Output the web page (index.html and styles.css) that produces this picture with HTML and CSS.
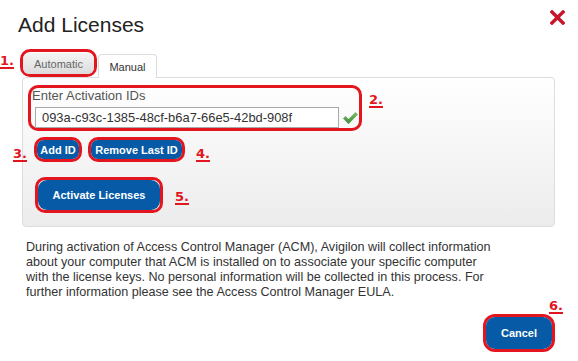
FILE: index.html
```html
<!DOCTYPE html>
<html>
<head>
<meta charset="utf-8">
<link rel="stylesheet" href="styles.css">
</head>
<body>
<div class="dialog">
  <div class="header">
    <h1 class="title">Add Licenses</h1>
    <svg class="close" width="15" height="15" viewBox="0 0 15 15"><path d="M2 2 L13 13 M13 2 L2 13" stroke="#c8152c" stroke-width="3.4" stroke-linecap="square"/></svg>
  </div>

  <div class="tabs">
    <span class="num num-1">1.</span>
    <div class="mark mark-tab"><div class="tab tab-active">Automatic</div></div>
    <div class="tab tab-plain">Manual</div>
  </div>

  <div class="panel">
    <div class="row row-input">
      <div class="mark mark-group">
        <div class="label">Enter Activation IDs</div>
        <div class="input-line">
          <div class="input">093a-c93c-1385-48cf-b6a7-66e5-42bd-908f</div>
          <svg class="check" width="17" height="14" viewBox="0 0 17 14">
            <defs><linearGradient id="g" x1="0" y1="0" x2="0" y2="1"><stop offset="0" stop-color="#7bbf6a"/><stop offset="1" stop-color="#3f8a3a"/></linearGradient></defs>
            <path d="M1 7.5 L3.5 5 L6.5 8 L13.5 1 L16 3.5 L6.5 13 Z" fill="url(#g)"/>
          </svg>
        </div>
      </div>
      <span class="num num-2">2.</span>
    </div>

    <div class="row row-buttons">
      <div class="mark mark-btn mark-add"><span class="num num-3">3.</span><button class="btn btn-small">Add ID</button></div>
      <div class="mark mark-btn"><button class="btn btn-small btn-remove">Remove Last ID</button></div>
      <span class="num num-4">4.</span>
    </div>

    <div class="row row-activate">
      <div class="mark mark-btn"><button class="btn btn-activate">Activate Licenses</button></div>
      <span class="num num-5">5.</span>
    </div>
  </div>

  <p class="info">During activation of Access Control Manager (ACM), Avigilon will collect information about your computer that ACM is installed on to associate your specific computer with the license keys. No personal information will be collected in this process. For further information please see the Access Control Manager EULA.</p>

  <div class="footer">
    <div class="mark mark-btn mark-cancel"><span class="num num-6">6.</span><button class="btn btn-cancel">Cancel</button></div>
  </div>
</div>
</body>
</html>
```
FILE: styles.css
```css
* { box-sizing: border-box; }
html, body { margin: 0; padding: 0; background: #fff; }
body {
  width: 578px;
  height: 361px;
  overflow: hidden;
  font-family: "Liberation Sans", Arial, sans-serif;
  color: #333;
}
.dialog { position: relative; }

.header {
  display: flex;
  justify-content: space-between;
  align-items: flex-start;
  padding: 10px 13px 0 18px;
  height: 39px;
}
.title {
  margin: 0;
  font-weight: normal;
  font-size: 21px;
  line-height: 29px;
  color: #222;
}
.close { margin-top: 0; }

.num {
  font-family: "DejaVu Sans", Verdana, sans-serif;
  font-weight: bold;
  font-size: 13px;
  line-height: 15px;
  color: #e3161f;
  text-decoration: underline;
  text-decoration-thickness: 1.5px;
  text-underline-offset: 2px;
}

.tabs {
  position: relative;
  display: flex;
  align-items: flex-end;
  margin-top: 10px;
  padding-left: 20px;
  height: 28px;
}
.num-1 { position: absolute; left: 0; top: 4px; }

.mark {
  border: 3px solid #e3161f;
  border-radius: 10px;
}
.mark-tab {
  width: 77px;
  height: 28px;
  padding: 1px 0 0 0;
}
.tab {
  font-size: 11px;
  display: flex;
  align-items: center;
  justify-content: center;
}
.tab-active {
  height: 21px;
  border-radius: 6px;
  background: linear-gradient(#f4f4f4, #dcdcdc);
  color: #666;
}
.tab-plain {
  width: 59px;
  height: 24px;
  margin-left: 1px;
  margin-bottom: -1px;
  border: 1px solid #ddd;
  border-bottom: none;
  border-radius: 4px 4px 0 0;
  background: #fff;
  color: #333;
  padding-top: 1px;
}

.panel {
  margin-left: 22px;
  width: 533px;
  height: 150px;
  border: 1px solid #ddd;
  border-radius: 4px;
  background: linear-gradient(#ffffff, #ececec);
  padding: 7px 0 0 5px;
}
.row { display: flex; }
.row-input { align-items: flex-start; }
.mark-group {
  width: 334px;
  padding: 0 0 0 1px;
}
.label {
  font-size: 13px;
  line-height: 16px;
  color: #555;
}
.input-line {
  display: flex;
  align-items: center;
  margin-top: 3px;
  padding-left: 3px;
}
.input {
  width: 304px;
  height: 21px;
  border: 1px solid #a9a9a9;
  background: #fff;
  font-size: 12.9px;
  line-height: 19px;
  padding-left: 6px;
  color: #333;
}
.check { margin-left: 3px; }
.num-2 { margin: 7px 0 0 7px; }

.row-buttons {
  margin-top: 6px;
  margin-left: 6px;
  align-items: flex-end;
  gap: 6px;
}
.mark-btn { position: relative; display: flex; }
.btn {
  border: none;
  margin: 0;
  padding: 0;
  font-family: "Liberation Sans", Arial, sans-serif;
  font-weight: bold;
  font-size: 11px;
  color: #fff;
  background: #065aa6;
  border-radius: 7px;
}
.btn-small { height: 19px; width: 42px; }
.btn-remove { width: 91px; }
.num-3 { position: absolute; left: -24px; top: 6px; }
.num-4 { margin-left: 5px; margin-bottom: 1px; }

.row-activate {
  margin-top: 15px;
  margin-left: 7px;
  align-items: center;
}
.btn-activate { width: 122px; height: 30px; border-radius: 9px; }
.num-5 { margin-left: 12px; margin-top: 3px; }

.info {
  margin: 13px 0 0 26px;
  width: 473px;
  font-size: 12.6px;
  line-height: 15px;
  color: #333;
}

.footer {
  display: flex;
  justify-content: flex-end;
  padding-right: 23px;
  margin-top: 14px;
}
.btn-cancel { width: 66px; height: 32px; border-radius: 9px; }
.mark-cancel { border-radius: 12px; }
.num-6 { position: absolute; right: -11px; top: -19px; }
```
